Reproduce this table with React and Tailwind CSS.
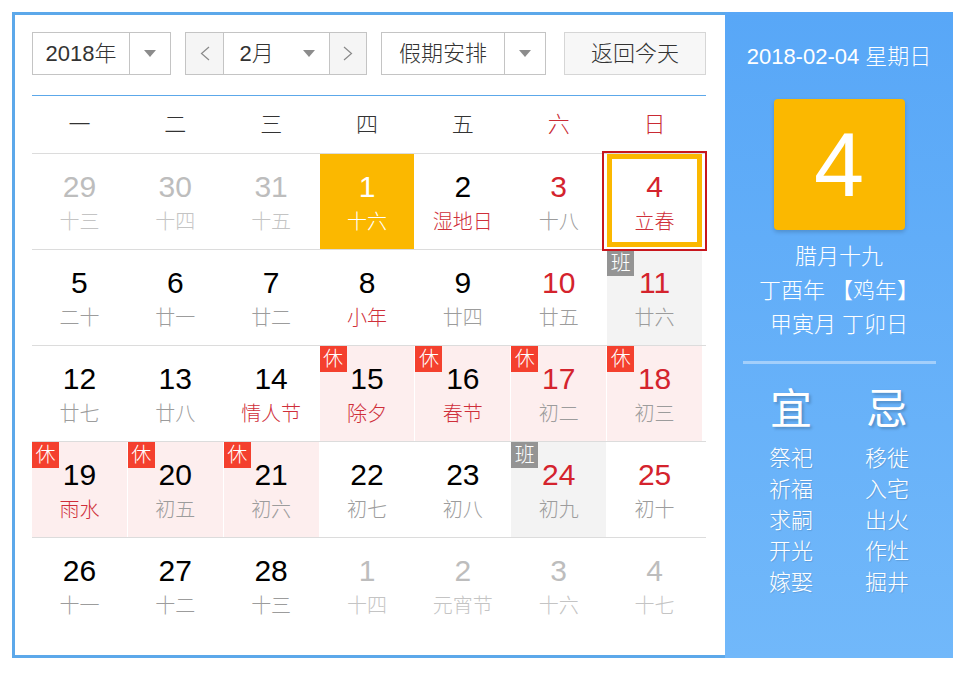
import React from "react";

const FONT = "font-['Liberation_Sans','Noto_Sans_CJK_SC',sans-serif]";

const rows = [
  [
    { d: 29, l: "十三", o: 1 },
    { d: 30, l: "十四", o: 1 },
    { d: 31, l: "十五", o: 1 },
    { d: 1, l: "十六", bg: "y" },
    { d: 2, l: "湿地日", lr: 1 },
    { d: 3, l: "十八", nr: 1 },
    { d: 4, l: "立春", nr: 1, lr: 1, today: 1 },
  ],
  [
    { d: 5, l: "二十" },
    { d: 6, l: "廿一" },
    { d: 7, l: "廿二" },
    { d: 8, l: "小年", lr: 1 },
    { d: 9, l: "廿四" },
    { d: 10, l: "廿五", nr: 1 },
    { d: 11, l: "廿六", nr: 1, bg: "g", tag: "b" },
  ],
  [
    { d: 12, l: "廿七" },
    { d: 13, l: "廿八" },
    { d: 14, l: "情人节", lr: 1 },
    { d: 15, l: "除夕", lr: 1, bg: "p", tag: "x" },
    { d: 16, l: "春节", lr: 1, bg: "p", tag: "x" },
    { d: 17, l: "初二", nr: 1, bg: "p", tag: "x" },
    { d: 18, l: "初三", nr: 1, bg: "p", tag: "x" },
  ],
  [
    { d: 19, l: "雨水", lr: 1, bg: "p", tag: "x" },
    { d: 20, l: "初五", bg: "p", tag: "x" },
    { d: 21, l: "初六", bg: "p", tag: "x" },
    { d: 22, l: "初七" },
    { d: 23, l: "初八" },
    { d: 24, l: "初九", nr: 1, bg: "g", tag: "b" },
    { d: 25, l: "初十", nr: 1 },
  ],
  [
    { d: 26, l: "十一" },
    { d: 27, l: "十二" },
    { d: 28, l: "十三" },
    { d: 1, l: "十四", o: 1 },
    { d: 2, l: "元宵节", o: 1 },
    { d: 3, l: "十六", o: 1 },
    { d: 4, l: "十七", o: 1 },
  ],
];

function Tri() {
  return (
    <div className="w-0 h-0 border-l-[6px] border-r-[6px] border-t-[7px] border-l-transparent border-r-transparent border-t-[#8c8c8c]" />
  );
}

function Chevron({ dir }) {
  return (
    <svg width="10" height="15" viewBox="0 0 10 15">
      <polyline
        points={dir === "l" ? "9,1 1.5,7.5 9,14" : "1,1 8.5,7.5 1,14"}
        fill="none"
        stroke="#8a8a8a"
        strokeWidth="1.2"
      />
    </svg>
  );
}

function Cell({ c }) {
  let bg = "bg-white";
  if (c.bg === "y") bg = "bg-[#fbb800]";
  if (c.bg === "p") bg = "bg-[#fdeeee]";
  if (c.bg === "g") bg = "bg-[#f3f3f3]";
  let numColor = "text-black";
  let lunColor = "text-[#9c9c9c]";
  if (c.o) {
    numColor = "text-[#bdbdbd]";
    lunColor = "text-[#c4c4c4]";
  }
  if (c.nr) numColor = "text-[#d4232d]";
  if (c.lr) lunColor = "text-[#cf2f3a]";
  if (c.bg === "y") {
    numColor = "text-white";
    lunColor = "text-white";
  }
  return (
    <div className={`relative h-[95px] ${bg} flex flex-col items-center`}>
      {c.today ? (
        <>
          <div className="absolute top-0 bottom-[2px] left-0 right-0 border-[5px] border-[#fbb800]" />
          <div className="absolute top-[-3px] bottom-[-2px] left-[-5px] right-[-5px] border-2 border-[#c8161d] z-10" />
        </>
      ) : null}
      {c.tag ? (
        <div
          className={`absolute top-0 left-0 w-[27px] h-[26px] flex items-center justify-center text-[20px] leading-[26px] text-white ${
            c.tag === "x" ? "bg-[#f4402e]" : "bg-[#949494]"
          }`}
        >
          {c.tag === "x" ? "休" : "班"}
        </div>
      ) : null}
      <div className={`mt-[18px] text-[30px] leading-[30px] ${numColor}`}>{c.d}</div>
      <div className={`mt-[8px] text-[20px] leading-[24px] ${lunColor}`}>{c.l}</div>
    </div>
  );
}

export default function App() {
  const week = ["一", "二", "三", "四", "五", "六", "日"];
  const yi = ["祭祀", "祈福", "求嗣", "开光", "嫁娶"];
  const ji = ["移徙", "入宅", "出火", "作灶", "掘井"];
  return (
    <div className={`w-[960px] h-[673px] bg-white pt-[12px] pl-[12px] font-light ${FONT}`}>
      <div className="flex h-[646px] w-[941px]">
        {/* left calendar */}
        <div className="w-[713px] h-[646px] border-l-[3px] border-t-[3px] border-b-[3px] border-[#5ca8ea] pl-[17px] pt-[17px] pr-[19px]">
          {/* controls */}
          <div className="flex h-[43px]">
            <div className="flex border border-[#c4c4c4] bg-white">
              <div className="w-[96px] flex items-center justify-center text-[22px] text-[#333]">2018年</div>
              <div className="w-[41px] border-l border-[#c4c4c4] flex items-center justify-center">
                <Tri />
              </div>
            </div>
            <div className="ml-[14px] flex border border-[#c4c4c4] bg-white">
              <div className="w-[37px] bg-[#f5f5f5] flex items-center justify-center">
                <Chevron dir="l" />
              </div>
              <div className="w-[106px] border-l border-[#c4c4c4] flex">
                <div className="w-[66px] flex items-center justify-center text-[22px] text-[#333]">2月</div>
                <div className="w-[40px] flex items-center justify-center">
                  <Tri />
                </div>
              </div>
              <div className="w-[37px] border-l border-[#c4c4c4] bg-[#f5f5f5] flex items-center justify-center">
                <Chevron dir="r" />
              </div>
            </div>
            <div className="ml-[14px] flex border border-[#c4c4c4] bg-white">
              <div className="w-[122px] flex items-center justify-center text-[22px] text-[#333]">假期安排</div>
              <div className="w-[41px] border-l border-[#c4c4c4] flex items-center justify-center">
                <Tri />
              </div>
            </div>
            <div className="ml-auto w-[142px] border border-[#d6d6d6] bg-[#f7f7f7] flex items-center justify-center text-[22px] text-[#333]">
              返回今天
            </div>
          </div>

          {/* weekday header */}
          <div className="mt-[20px] border-t border-[#5ca8ea] border-b border-b-[#dcdcdc] h-[59px]">
            <div className="w-[670px] h-full grid grid-cols-7 gap-x-px">
              {week.map((w, i) => (
                <div
                  key={w}
                  className={`flex items-center justify-center text-[22px] ${i >= 5 ? "text-[#c92a33]" : "text-[#333]"}`}
                >
                  {w}
                </div>
              ))}
            </div>
          </div>

          {/* days */}
          {rows.map((r, ri) => (
            <div key={ri} className={ri < rows.length - 1 ? "border-b border-[#dcdcdc]" : ""}>
              <div className="w-[670px] grid grid-cols-7 gap-x-px">
                {r.map((c, ci) => (
                  <Cell key={ci} c={c} />
                ))}
              </div>
            </div>
          ))}
        </div>

        {/* right panel */}
        <div className="w-[228px] h-[646px] bg-linear-to-b from-[#58a7f7] to-[#71b8fa] flex flex-col items-center text-white">
          <div className="mt-[33px] text-[22px] leading-[24px]">2018-02-04 星期日</div>
          <div className="mt-[30px] w-[131px] h-[131px] rounded-[4px] bg-[#fbb800] shadow-[0_2px_4px_rgba(0,0,0,0.18)] flex items-center justify-center text-[90px] leading-none">
            4
          </div>
          <div className="mt-[10px] text-[22px] leading-[34px]">腊月十九</div>
          <div className="text-[22px] leading-[34px]">丁酉年 【鸡年】</div>
          <div className="text-[22px] leading-[34px]">甲寅月 丁卯日</div>
          <div className="mt-[19px] w-[193px] h-[3px] bg-[#a3cffb]" />
          <div className="mt-[22px] flex">
            <div className="w-[96px] flex flex-col items-center">
              <div className="text-[42px] leading-[48px] font-normal [text-shadow:2px_2px_3px_rgba(0,0,0,0.22)]">宜</div>
              <div className="mt-[9px] flex flex-col items-center">
                {yi.map((t) => (
                  <div key={t} className="text-[22px] leading-[31px] [text-shadow:1px_1px_1px_rgba(0,0,0,0.12)]">
                    {t}
                  </div>
                ))}
              </div>
            </div>
            <div className="w-[96px] flex flex-col items-center">
              <div className="text-[42px] leading-[48px] font-normal [text-shadow:2px_2px_3px_rgba(0,0,0,0.22)]">忌</div>
              <div className="mt-[9px] flex flex-col items-center">
                {ji.map((t) => (
                  <div key={t} className="text-[22px] leading-[31px] [text-shadow:1px_1px_1px_rgba(0,0,0,0.12)]">
                    {t}
                  </div>
                ))}
              </div>
            </div>
          </div>
        </div>
      </div>
    </div>
  );
}
